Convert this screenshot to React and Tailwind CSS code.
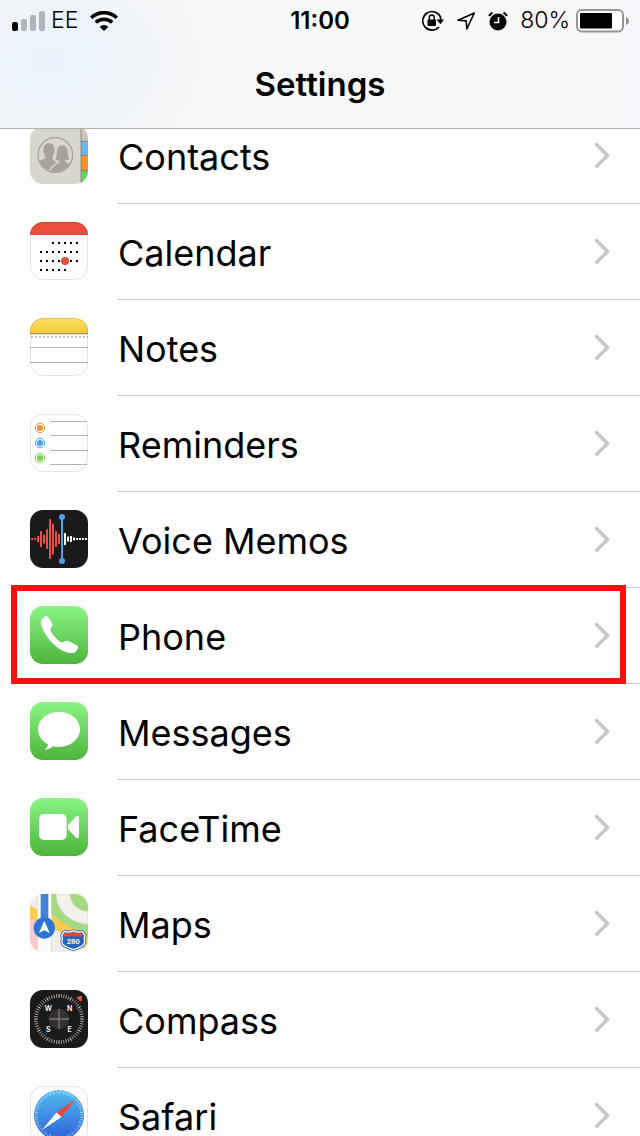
import React from "react";

const range = (n) => Array.from({ length: n }, (_, i) => i);

function Tile({ id, viewBox = "0 0 58 58", base = [0, 0, 58, 58, 13], fill = "#fff", outline, children }) {
  const [x, y, w, h, r] = base;
  return (
    <svg viewBox={viewBox} className="mb-[2px] size-[58px] shrink-0" aria-hidden="true">
      <clipPath id={`${id}-clip`}>
        <rect x={x} y={y} width={w} height={h} rx={r} />
      </clipPath>
      <g clipPath={`url(#${id}-clip)`}>
        <rect x={x} y={y} width={w} height={h} fill={fill} />
        {children}
      </g>
      {outline && <rect x="0.5" y="0.5" width="57" height="57" rx="12.5" fill="none" stroke="#000" strokeOpacity="0.11" />}
    </svg>
  );
}

const large = { viewBox: "0 0 174 174", base: [0, 0, 174, 174, 39] };

function Green({ id, children }) {
  return (
    <Tile id={id} {...large}>
      <linearGradient id={`${id}-g`} x1="0" y1="0" x2="0" y2="1">
        <stop offset="0" stopColor="#8bf584" />
        <stop offset="1" stopColor="#4eb43c" />
      </linearGradient>
      <rect width="174" height="174" fill={`url(#${id}-g)`} />
      {children}
    </Tile>
  );
}

function ContactsIcon() {
  return (
    <Tile id="contacts" {...large} fill="#d8d7cd">
      <rect x="153" width="21" height="46" fill="#c9c5b8" />
      <rect x="153" y="46" width="21" height="42" fill="#62b8f8" />
      <rect x="153" y="88" width="21" height="46" fill="#f3912f" />
      <rect x="153" y="134" width="21" height="40" fill="#62d462" />
      <path d="M153 0v174M153 46h21M153 88h21M153 134h21" stroke="#6e6a58" strokeOpacity=".65" strokeWidth="3" />
      <clipPath id="contacts-c"><circle cx="76" cy="87" r="50" /></clipPath>
      <g clipPath="url(#contacts-c)" fill="#a9a29b">
        <path d="M57 52c12 0 17 8 16 20 2 4 1 9-2 11-1 6-3 8-4 11 0 8 6 9 14 13v35H18v-34c10-6 28-6 29-14-1-3-3-5-4-11-3-2-4-7-2-11-1-12 4-20 16-20z" />
        <path d="M97 55c-16 0-19 13-19 27 0 9-2 15-5 19 4 4 9 5 13 5 0 8-28 10-31 40h80v-30c-12-6-26-6-27-11 5 0 10-1 13-4-4-5-5-11-5-19 0-14-4-27-19-27z" stroke="#d8d7cd" strokeWidth="5" />
      </g>
      <circle cx="76" cy="87" r="52" fill="none" stroke="#a9a29b" strokeWidth="4" />
    </Tile>
  );
}

function CalendarIcon() {
  const rows = [[2, 6], [0, 6], [0, 6], [0, 4]];
  return (
    <Tile id="calendar" outline>
      <rect width="58" height="13" fill="#ea4c3d" />
      {rows.map(([a, b], r) =>
        range(7).filter((c) => c >= a && c <= b).map((c) => (
          <rect key={`${r}-${c}`} x={10 + c * 6} y={20 + r * 9} width="2" height="2" fill="#000" />
        ))
      )}
      <circle cx="35" cy="39" r="4" fill="#ea4c3d" />
    </Tile>
  );
}

function NotesIcon() {
  return (
    <Tile id="notes" outline>
      <linearGradient id="notes-g" x1="0" y1="0" x2="0" y2="1">
        <stop offset="0" stopColor="#fbdf6c" />
        <stop offset="1" stopColor="#f5cb35" />
      </linearGradient>
      <rect width="58" height="15" fill="url(#notes-g)" />
      <rect y="15" width="58" height="1" fill="#a5905a" />
      <rect y="16" width="58" height="1" fill="#dcdcdc" />
      <path d="M1 19h57" stroke="#c4c4c4" strokeWidth="2" strokeDasharray="2 2" />
      <path d="M0 29.5h58M0 44.5h58" stroke="#b4b4b4" />
    </Tile>
  );
}

function RemindersIcon() {
  return (
    <Tile id="reminders" outline>
      {[["#ee9434", 14], ["#4ba5ea", 29], ["#7fd254", 44]].map(([c, y]) => (
        <g key={y}>
          <circle cx="10" cy={y} r="4.7" fill="none" stroke={c} />
          <circle cx="10" cy={y} r="3.1" fill={c} />
        </g>
      ))}
      <path d="M20 7.5h38M20 21.5h38M20 36.5h38M20 50.5h38" stroke="#b4b4b4" />
    </Tile>
  );
}

function VoiceMemosIcon() {
  const red = [2, 2, 6, 16, 9, 20, 40, 31, 16, 10];
  const white = [12, 5, 6, 3, 2, 2, 2, 2];
  return (
    <Tile id="voice" fill="#1a1a1c">
      {red.map((h, i) => <rect key={i} x={1 + i * 3} y={29 - h / 2} width="2" height={h} rx=".6" fill="#ea4f41" />)}
      {white.map((h, i) => <rect key={i} x={34 + i * 3} y={29 - h / 2} width="2" height={h} rx=".4" fill="#fff" />)}
      <path d="M32 6v45" stroke="#4ba2ee" strokeWidth="2" />
      <circle cx="32" cy="7" r="3" fill="#4ba2ee" />
      <circle cx="32" cy="51" r="3" fill="#4ba2ee" />
    </Tile>
  );
}

function PhoneIcon() {
  return (
    <Green id="phone">
      <path fill="#fff" d="M34 41C38 36 43 32 50 30c4-1 19 23 18 28-1 4-7 8-7 13 0 7 20 31 31 37 6 3 12-3 18-4 6 0 29 12 34 17 2 3-2 12-8 17-8 5-26 4-41-5C68 117 43 87 34 58c-2-8-2-13 0-17z" />
    </Green>
  );
}

function MessagesIcon() {
  return (
    <Green id="messages">
      <path fill="#fff" d="M87 30c35 0 63 23 63 52s-28 53-63 53c-6 0-12-1-18-2-7 7-15 10-25 11 5-4 9-10 10-17C36 117 24 101 24 82c0-29 28-52 63-52z" />
    </Green>
  );
}

function FaceTimeIcon() {
  return (
    <Green id="facetime">
      <rect x="27" y="48" width="83" height="78" rx="15" fill="#fff" />
      <path fill="#fff" d="M114 84v7c0 3 1 4 3 6l20 21c5 5 10 3 10-3V60c0-6-5-8-10-3l-20 21c-2 2-3 3-3 6z" />
    </Green>
  );
}

function MapsIcon() {
  return (
    <Tile id="maps" {...large} fill="#efeeea">
      <path d="M63 0h111v130L63 63z" fill="#a4da80" />
      <path d="M78 0c2 48 38 87 96 91V52c-32-2-52-21-54-52z" fill="#f2f1ec" stroke="#d5d1c8" strokeWidth="2" />
      <path d="M0 70l24 12v92H0z" fill="#f8c9cf" />
      <path d="M0 34l24 14v36L0 73zM63 65l111 64v43L63 98z" fill="#fdcb50" />
      <path d="M63 66l111 64M63 98l60 35" stroke="#e2b246" strokeWidth="2" />
      <path d="M63 98l90 54v22H63z" fill="#efeeea" />
      <rect x="22" width="42" height="174" fill="#fbfbfa" />
      <path d="M22 0v174M64 0v174" stroke="#d4d2cb" strokeWidth="2" />
      <rect x="32" width="23" height="90" fill="#4382d9" />
      <circle cx="43" cy="102" r="32" fill="#2f74d2" />
      <path d="M43 80l16 37-16-8-16 8z" fill="#fff" />
      <path id="maps-shield" d="M105 112c9 4 17 3 25-2 8 5 16 6 25 2 5 4 8 8 10 13-3 5-3 9-1 14 3 15-12 20-34 28-22-8-37-13-34-28 2-5 2-9-1-14 2-5 5-9 10-13z" fill="#2864b5" stroke="#2864b5" strokeWidth="9" strokeLinejoin="round" />
      <path d="M105 112c9 4 17 3 25-2 8 5 16 6 25 2 5 4 8 8 10 13-3 5-3 9-1 14 3 15-12 20-34 28-22-8-37-13-34-28 2-5 2-9-1-14 2-5 5-9 10-13z" fill="#2864b5" stroke="#fff" strokeWidth="4" />
      <path d="M106 115c9 3 16 2 24-2 8 4 15 5 24 2l7 10-1 2h-60l-1-2z" fill="#df4542" />
      <text x="130" y="149" textAnchor="middle" fontFamily="Inter, sans-serif" fontWeight="700" fontSize="20" fill="#fff">280</text>
    </Tile>
  );
}

function CompassIcon() {
  return (
    <Tile id="compass" {...large} fill="#1a1a1b">
      {range(60).map((i) => (
        <path key={i} d="M87 12v11" stroke={i % 5 ? "#b5b5b5" : "#fff"} strokeWidth="2.4" transform={`rotate(${i * 6} 87 87)`} />
      ))}
      <circle cx="87" cy="87" r="31" fill="#303032" />
      <path d="M87 57v60M57 87h60" stroke="#777" strokeWidth="4" />
      <path d="M156 17l-2 19-16-14z" fill="#ef5348" />
      <g fontFamily="Inter, sans-serif" fontWeight="600" fontSize="21" fill="#fff" textAnchor="middle">
        <text x="55" y="64">W</text>
        <text x="119" y="64">N</text>
        <text x="55" y="126">S</text>
        <text x="119" y="126">E</text>
      </g>
    </Tile>
  );
}

function SafariIcon() {
  return (
    <Tile id="safari" outline>
      <linearGradient id="safari-g" x1="0" y1="0" x2="0" y2="1">
        <stop offset="0" stopColor="#53bdf0" />
        <stop offset="1" stopColor="#2d5fd8" />
      </linearGradient>
      <circle cx="29" cy="29" r="25" fill="url(#safari-g)" />
      {range(60).map((i) => (
        <path key={i} d={i % 2 ? "M29 5v2" : "M29 5v3"} stroke="#fff" strokeOpacity=".75" strokeWidth=".7" transform={`rotate(${i * 6} 29 29)`} />
      ))}
      <path d="M46 13L26.500 26.500l5 4.500z" fill="#ea4a3d" />
      <path d="M12 44L26.500 26.500l5 4.500z" fill="#fff" />
    </Tile>
  );
}

const items = [
  ["Contacts", ContactsIcon],
  ["Calendar", CalendarIcon],
  ["Notes", NotesIcon],
  ["Reminders", RemindersIcon],
  ["Voice Memos", VoiceMemosIcon],
  ["Phone", PhoneIcon],
  ["Messages", MessagesIcon],
  ["FaceTime", FaceTimeIcon],
  ["Maps", MapsIcon],
  ["Compass", CompassIcon],
  ["Safari", SafariIcon],
];

function StatusBar() {
  return (
    <div className="grid h-[41px] grid-cols-[1fr_auto_1fr] items-center px-[11px] text-[23px] leading-none">
      <div className="flex items-center">
        <svg viewBox="0 0 33 20" className="ml-px h-[20px] w-[33px]" aria-hidden="true">
          <rect y="11" width="6" height="9" rx="2" />
          <g fill="#b1b5ba">
            <rect x="9" y="8" width="6" height="12" rx="2" />
            <rect x="18" y="4" width="6" height="16" rx="2" />
            <rect x="27" width="6" height="20" rx="2" />
          </g>
        </svg>
        <span className="ml-[6px] font-light">EE</span>
        <svg viewBox="0 0 28 20" className="ml-3 h-[20px] w-[28px]" fill="none" stroke="#000" aria-hidden="true">
          <path d="M1.200 6.800a18.500 18.500 0 0 1 25.600 0" strokeWidth="3.500" />
          <path d="M5.800 11.500a12 12 0 0 1 16.400 0" strokeWidth="3.500" />
          <path d="M14 20l-4.300-4.300a6 6 0 0 1 8.600 0z" fill="#000" stroke="none" />
        </svg>
      </div>
      <time className="text-[24px] font-semibold">11:00</time>
      <div className="flex items-center justify-end">
        <svg viewBox="0 0 23 22" className="h-[22px] w-[23px]" aria-hidden="true">
          <path d="M19.500 7a9.300 9.300 0 1 0-1.500 10" fill="none" stroke="#000" strokeWidth="1.600" />
          <path d="M19.500 6.500V10" fill="none" stroke="#000" strokeWidth="1.600" />
          <path d="M15.500 9.500h7.500l-3.600 4.700z" />
          <rect x="6.500" y="9.500" width="8.500" height="6.500" rx="1" />
          <path d="M8.300 10V7.500a2.450 2.450 0 0 1 4.900 0V10" fill="none" stroke="#000" strokeWidth="1.400" />
        </svg>
        <svg viewBox="0 0 20 20" className="ml-3 h-[20px] w-[20px]" aria-hidden="true">
          <path d="M18.300 2L10.800 18l-.6-8.100L2 9.300z" fill="none" stroke="#000" strokeWidth="1.600" strokeLinejoin="round" />
        </svg>
        <svg viewBox="0 0 20 20" className="ml-3 h-[20px] w-[20px]" aria-hidden="true">
          <circle cx="10" cy="11" r="8.500" />
          <path d="M10.500 6v5.500H6" fill="none" stroke="#f8f8f8" strokeWidth="1.600" />
          <path d="M1.200 5A7 7 0 0 1 4.500 1.800M18.800 5a7 7 0 0 0-3.300-3.200" fill="none" stroke="#000" strokeWidth="2.200" />
        </svg>
        <span className="ml-3 font-light">80%</span>
        <svg viewBox="0 0 53 24" className="ml-[6px] h-[24px] w-[53px]" aria-hidden="true">
          <rect x="1" y="1" width="46" height="21.500" rx="5" fill="#fff" stroke="#949494" strokeWidth="2" />
          <rect x="4" y="4" width="32" height="15.500" rx="1" />
          <path d="M50 8c4 2 4 6 0 8z" fill="#949494" />
        </svg>
      </div>
    </div>
  );
}

export default function App() {
  return (
    <div className="flex h-screen flex-col overflow-hidden bg-white font-['Inter','Liberation_Sans',sans-serif] text-black">
      <header className="shrink-0 border-b border-[#b0b0b2] bg-[#f8f8f8] bg-[radial-gradient(ellipse_200px_150px_at_50px_60px,#e9f2fc,#f2f5f8_50%,transparent),linear-gradient(to_left,#f6f7fb,transparent_15%)]">
        <StatusBar />
        <h1 className="flex h-[87px] items-center justify-center text-[33px] leading-none font-semibold">Settings</h1>
      </header>
      <main className="min-h-0 flex-1 overflow-hidden">
        <ul className="-mt-[21px]">
          {items.map(([name, Icon]) => (
            <li key={name} className="relative">
              <a href={`#${name.toLowerCase().replace(" ", "-")}`} className="flex h-24 items-center gap-[30px] pl-[30px]">
                <Icon />
                <span className="flex h-full flex-1 items-center justify-between border-b border-[#c8c7cc] pt-[2px] pr-[30px] text-[36px] leading-none">
                  {name}
                  <svg viewBox="0 0 16 28" className="mb-[2px] h-[28px] w-[16px]" fill="none" stroke="#c7c7cc" strokeWidth="3.500" aria-hidden="true">
                    <path d="M1.500 1.500L13.500 13.500L1.500 25.500" />
                  </svg>
                </span>
              </a>
              {name === "Phone" && (
                <div className="pointer-events-none absolute -top-[3px] right-[14px] bottom-0 left-[11px] border-6 border-[#f50f0f]" />
              )}
            </li>
          ))}
        </ul>
      </main>
    </div>
  );
}
